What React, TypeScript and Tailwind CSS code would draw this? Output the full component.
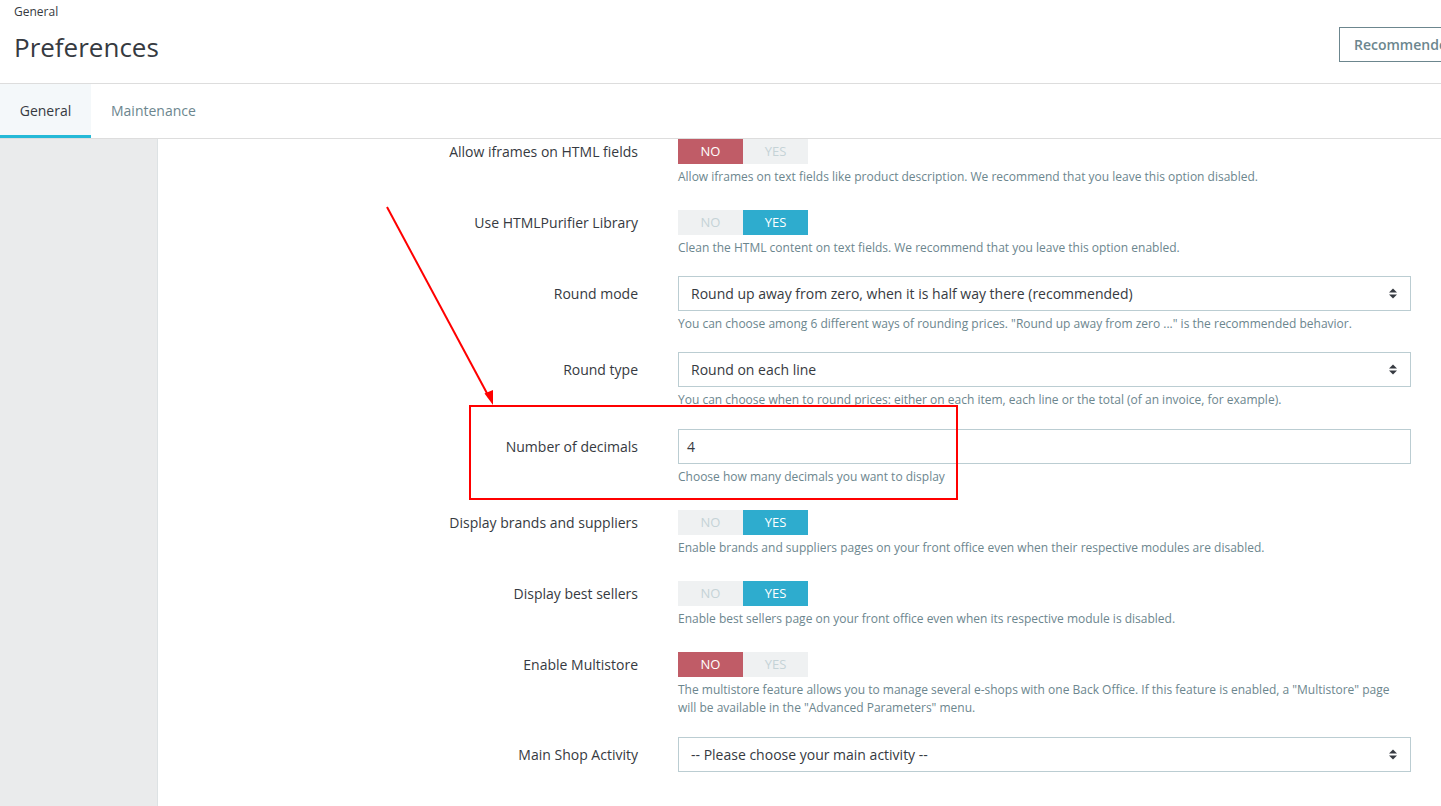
import React from 'react'

type Row =
  | { kind: 'switch'; label: string; value: boolean; help: string[]; mb: string }
  | { kind: 'select'; label: string; value: string; help?: string[]; mb: string }
  | { kind: 'input'; label: string; value: string; help: string[]; mb: string }

const rows: Row[] = [
  {
    kind: 'switch',
    label: 'Allow iframes on HTML fields',
    value: false,
    help: ['Allow iframes on text fields like product description. We recommend that you leave this option disabled.'],
    mb: 'mb-[24px]',
  },
  {
    kind: 'switch',
    label: 'Use HTMLPurifier Library',
    value: true,
    help: ['Clean the HTML content on text fields. We recommend that you leave this option enabled.'],
    mb: 'mb-[19px]',
  },
  {
    kind: 'select',
    label: 'Round mode',
    value: 'Round up away from zero, when it is half way there (recommended)',
    help: ['You can choose among 6 different ways of rounding prices. "Round up away from zero ..." is the recommended behavior.'],
    mb: 'mb-[19px]',
  },
  {
    kind: 'select',
    label: 'Round type',
    value: 'Round on each line',
    help: ['You can choose when to round prices: either on each item, each line or the total (of an invoice, for example).'],
    mb: 'mb-[20px]',
  },
  {
    kind: 'input',
    label: 'Number of decimals',
    value: '4',
    help: ['Choose how many decimals you want to display'],
    mb: 'mb-[24px]',
  },
  {
    kind: 'switch',
    label: 'Display brands and suppliers',
    value: true,
    help: ['Enable brands and suppliers pages on your front office even when their respective modules are disabled.'],
    mb: 'mb-[24px]',
  },
  {
    kind: 'switch',
    label: 'Display best sellers',
    value: true,
    help: ['Enable best sellers page on your front office even when its respective module is disabled.'],
    mb: 'mb-[24px]',
  },
  {
    kind: 'switch',
    label: 'Enable Multistore',
    value: false,
    help: [
      'The multistore feature allows you to manage several e-shops with one Back Office. If this feature is enabled, a "Multistore" page will be available in the "Advanced Parameters" menu.',
    ],
    mb: 'mb-[20px]',
  },
  {
    kind: 'select',
    label: 'Main Shop Activity',
    value: '-- Please choose your main activity --',
    mb: 'mb-0',
  },
]

function Toggle({ on }: { on: boolean }) {
  return (
    <div className="flex h-[25px] text-[13px] uppercase leading-[25px]">
      <span
        className={
          on
            ? 'w-[65px] text-center bg-[#eff1f2] text-[#c5d3d7]'
            : 'w-[65px] text-center bg-[#c05c67] text-white'
        }
      >
        No
      </span>
      <span
        className={
          on
            ? 'w-[65px] text-center bg-[#2eacce] text-white'
            : 'w-[65px] text-center bg-[#eff1f2] text-[#c5d3d7]'
        }
      >
        Yes
      </span>
    </div>
  )
}

function SelectBox({ value }: { value: string }) {
  return (
    <div className="flex h-[35px] items-center justify-between border border-[#bbcdd2] bg-white pl-[12px] pr-[13px] text-[14px] text-[#363a41]">
      <span>{value}</span>
      <svg width="8" height="11" viewBox="0 0 8 11" className="text-[#363a41]">
        <path d="M0 4.5 L4 0.5 L8 4.5 Z" fill="currentColor" />
        <path d="M0 6.5 L4 10.5 L8 6.5 Z" fill="currentColor" />
      </svg>
    </div>
  )
}

export default function App() {
  return (
    <div className="relative h-[806px] w-full overflow-hidden bg-white font-['Open_Sans',sans-serif] text-[#363a41]">
      {/* Page header */}
      <div className="flex h-[84px] border-b border-[#dddddd]">
        <div className="w-[1339px] shrink-0 pl-[14px]">
          <div className="pt-[3px] text-[12px] leading-[18px]">General</div>
          <h1 className="mt-[11px] text-[26px] leading-[31px]">Preferences</h1>
        </div>
        <button className="mt-[27px] h-[35px] shrink-0 whitespace-nowrap border border-[#6c868e] px-[14px] text-[14px] font-semibold text-[#6c868e]">
          Recommended Modules
        </button>
      </div>

      {/* Tabs */}
      <div className="flex h-[55px] border-b border-[#dddddd]">
        <div className="flex h-[54px] w-[91px] items-center justify-center border-b-[3px] border-[#25b9d7] bg-[#f4f8fa] pt-[1px] text-[14px] text-[#363a41]">
          General
        </div>
        <div className="flex h-[54px] items-center px-[20px] pb-[2px] text-[14px] text-[#6c868e]">
          Maintenance
        </div>
      </div>

      {/* Body */}
      <div className="flex h-full">
        <div className="w-[158px] shrink-0 border-r border-[#dde2e4] bg-[#eaebec]" />
        <div className="flex-1">
          {rows.map((row) => (
            <div key={row.label} className={`flex items-start ${row.mb}`}>
              <div
                className={
                  row.kind === 'switch'
                    ? 'flex h-[25px] w-[480px] shrink-0 items-center justify-end pb-[1px] text-[14px]'
                    : 'flex h-[35px] w-[480px] shrink-0 items-center justify-end pb-[1px] text-[14px]'
                }
              >
                {row.label}
              </div>
              <div className="ml-[40px] w-[733px] shrink-0">
                {row.kind === 'switch' && <Toggle on={row.value} />}
                {row.kind === 'select' && <SelectBox value={row.value} />}
                {row.kind === 'input' && (
                  <div className="flex h-[35px] items-center border border-[#bbcdd2] bg-white pl-[8px] text-[14px]">
                    {row.value}
                  </div>
                )}
                {row.help &&
                  row.help.map((h) => (
                    <p key={h} className="mt-[4px] text-[12px] leading-[18px] text-[#6c868e]">
                      {h}
                    </p>
                  ))}
              </div>
            </div>
          ))}
        </div>
      </div>

      {/* Red annotation overlay */}
      <div className="pointer-events-none absolute left-[469px] top-[405px] h-[95px] w-[489px] border-2 border-[#ff0000]" />
      <svg
        className="pointer-events-none absolute left-0 top-0"
        width="1441"
        height="806"
        viewBox="0 0 1441 806"
      >
        <line x1="387" y1="207" x2="489" y2="397" stroke="#ff0000" strokeWidth="2" />
        <path d="M493 405 L484.5 393.5 L493 390 Z" fill="#ff0000" />
      </svg>
    </div>
  )
}
